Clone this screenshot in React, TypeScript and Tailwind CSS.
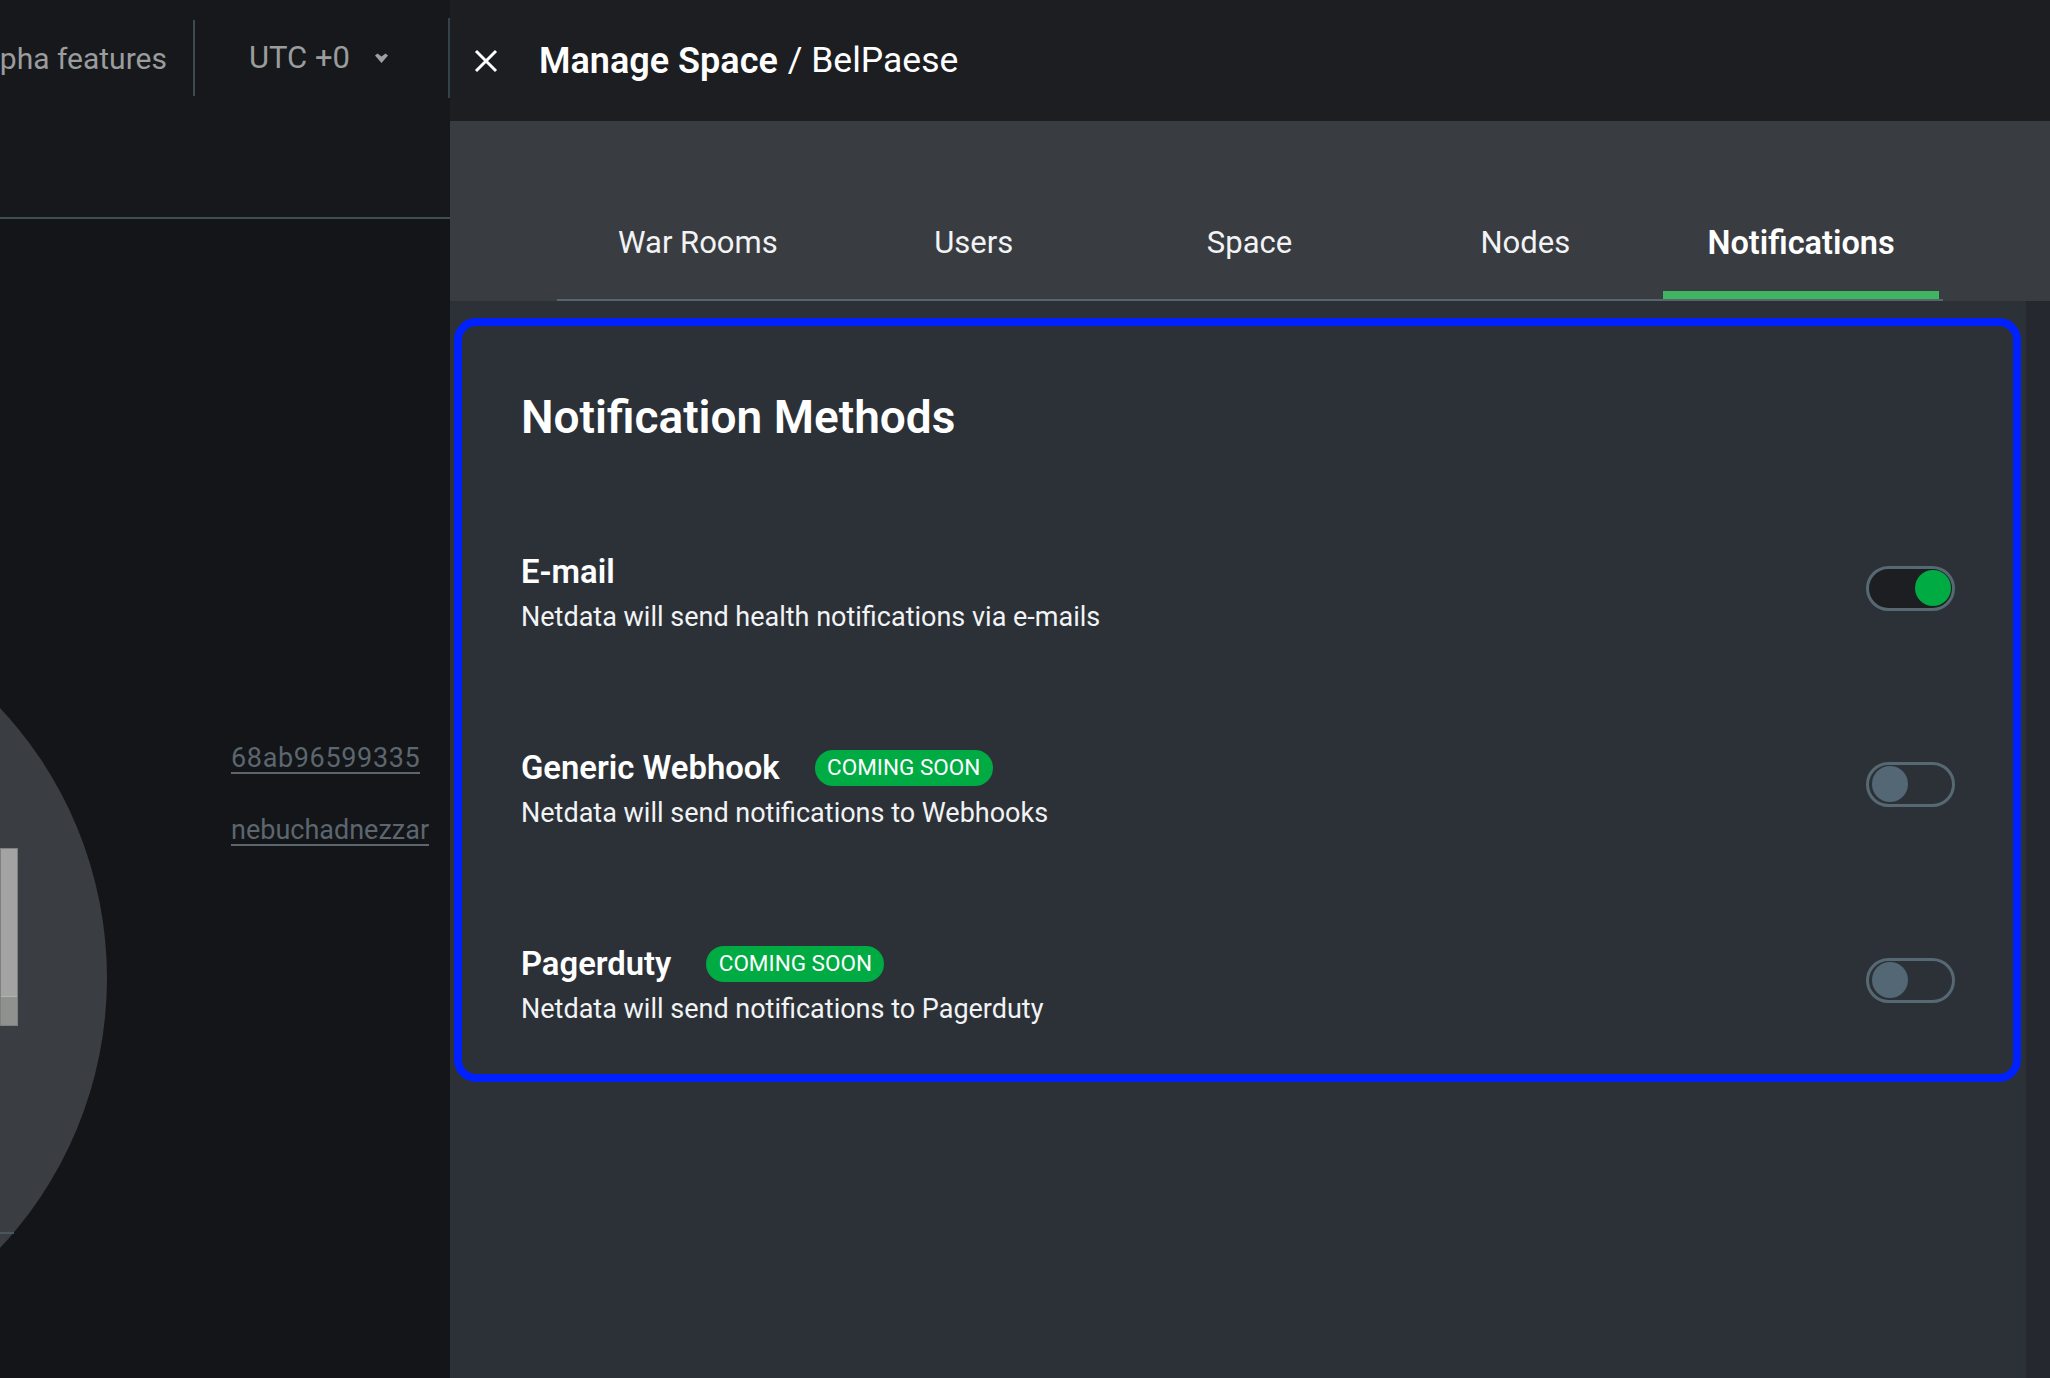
import React from 'react';

const font = { fontFamily: 'Roboto, "Open Sans", sans-serif' };

const tabs = ['War Rooms', 'Users', 'Space', 'Nodes', 'Notifications'];

const methods = [
  { name: 'E-mail', text: 'Netdata will send health notifications via e-mails', on: true, soon: false },
  { name: 'Generic Webhook', text: 'Netdata will send notifications to Webhooks', on: false, soon: true },
  { name: 'Pagerduty', text: 'Netdata will send notifications to Pagerduty', on: false, soon: true },
];

function Toggle({ on }: { on: boolean }) {
  return (
    <div
      className={`flex h-[45px] w-[89px] shrink-0 items-center rounded-full border-[3px] border-[#566973] ${
        on ? 'justify-end bg-[#1c1e22] pr-px' : 'justify-start pl-[3px]'
      }`}
    >
      <div className={`h-9 w-9 rounded-full ${on ? 'bg-[#00ab44]' : 'bg-[#536775]'}`} />
    </div>
  );
}

function Method({ name, text, on, soon }: { name: string; text: string; on: boolean; soon: boolean }) {
  return (
    <div className="flex h-[196px] items-center justify-between pr-[19px]">
      <div className="flex flex-col gap-[9px] pt-[12px]">
        <div className="flex h-9 items-center gap-[35px]">
          <span className="text-[32.8px] leading-9 font-semibold text-white">{name}</span>
          {soon && (
            <span className="flex h-9 w-[178px] items-center justify-center rounded-full bg-[#00ab44] text-[22.5px] text-white">
              COMING SOON
            </span>
          )}
        </div>
        <span className="text-[27px] leading-9 text-[#f2f3f4]">{text}</span>
      </div>
      <Toggle on={on} />
    </div>
  );
}

export default function App() {
  return (
    <div className="flex h-[1378px] w-[2050px] overflow-hidden bg-[#131518]" style={font}>
      {/* Page behind the modal, cut off by the panel */}
      <div className="relative h-full w-[450px] shrink-0 overflow-hidden">
        <div className="flex h-[219px] justify-end border-b-2 border-[#3f4d55] bg-[#16181b]">
          <div className="flex h-[116px] shrink-0 items-center text-[30px] text-[#9a9c9e]">
            <span className="whitespace-nowrap pr-[26px]">Enable alpha features</span>
            <div className="h-[76px] w-0.5 bg-[#3d4a52]" />
            <span className="ml-[54px] whitespace-nowrap text-[31px]">UTC +0</span>
            <svg className="ml-[25px] mr-[60px]" width="13" height="10" viewBox="0 0 13 10">
              <path d="M0 2.5 L2.5 0.5 L6.5 3.5 L10.5 0.5 L13 2.5 L6.5 10 Z" fill="#9f9f9f" />
            </svg>
            <div className="h-20 w-0.5 bg-[#33424b]" />
          </div>
        </div>
        <div className="ml-[231px] mt-[525px] flex flex-col items-start gap-[42px] text-[27px] leading-[28px] text-[#5c666e]">
          <span className="border-b-2 border-[#5c666e] tracking-[0.65px]">68ab96599335</span>
          <span className="border-b-2 border-[#5c666e]">nebuchadnezzar</span>
        </div>
        {/* Chart disc */}
        <div className="absolute left-[-681px] top-[584px] h-[788px] w-[788px] rounded-full bg-[#3a3d41]" />
        <div className="absolute left-0 top-[848px] flex h-[178px] w-[18px] flex-col border border-[#7d7f80] bg-[#a3a3a3]">
          <div className="mt-auto h-[29px] border-t border-[#b2b3b3] bg-[#8f918f]" />
        </div>
        <div className="absolute left-0 top-[1232px] h-0.5 w-[14px] bg-[#4a555d]" />
      </div>

      {/* Manage Space panel */}
      <div className="relative flex h-full flex-1 flex-col bg-[#2c3138]">
        <div className="flex h-[121px] items-center bg-[#1c1e22] pl-[23px] text-white">
          <svg width="26" height="26" viewBox="0 0 26 26" fill="none" stroke="#ffffff" strokeWidth="3">
            <path d="M3 3 L23 23 M23 3 L3 23" />
          </svg>
          <span className="ml-[40px] text-[36px] font-semibold">Manage Space</span>
          <span className="ml-[10px] text-[35.5px]">/ BelPaese</span>
        </div>
        <div className="flex h-[180px] flex-col justify-end bg-[#393c41] pl-[107px] pr-[107px]">
          <div className="grid grid-cols-5 border-b-2 border-[#56666f] pl-[3px] pr-[4px]">
            {tabs.map((t, i) => (
              <div
                key={t}
                className={`flex h-[92px] items-center justify-center border-b-8 pb-[12px] ${
                  i === 4 ? 'border-[#3fb55f] text-[32.5px] font-semibold text-white' : 'border-transparent text-[31px] text-[#f2f3f4]'
                }`}
              >
                {t}
              </div>
            ))}
          </div>
        </div>
        <div className="flex flex-1">
          <div className="flex-1 pl-1 pr-[5px] pt-[17px]">
            <div className="h-[764px] rounded-[22px] border-8 border-[#0021ff] pl-[59px] pr-[39px]">
              <h2 className="pt-[65px] text-[46px] leading-[52px] font-semibold text-white">Notification Methods</h2>
              <div className="mt-[47px]">
                {methods.map((m) => (
                  <Method key={m.name} {...m} />
                ))}
              </div>
            </div>
          </div>
          <div className="w-6 bg-[#25282e]" />
        </div>
      </div>
    </div>
  );
}
